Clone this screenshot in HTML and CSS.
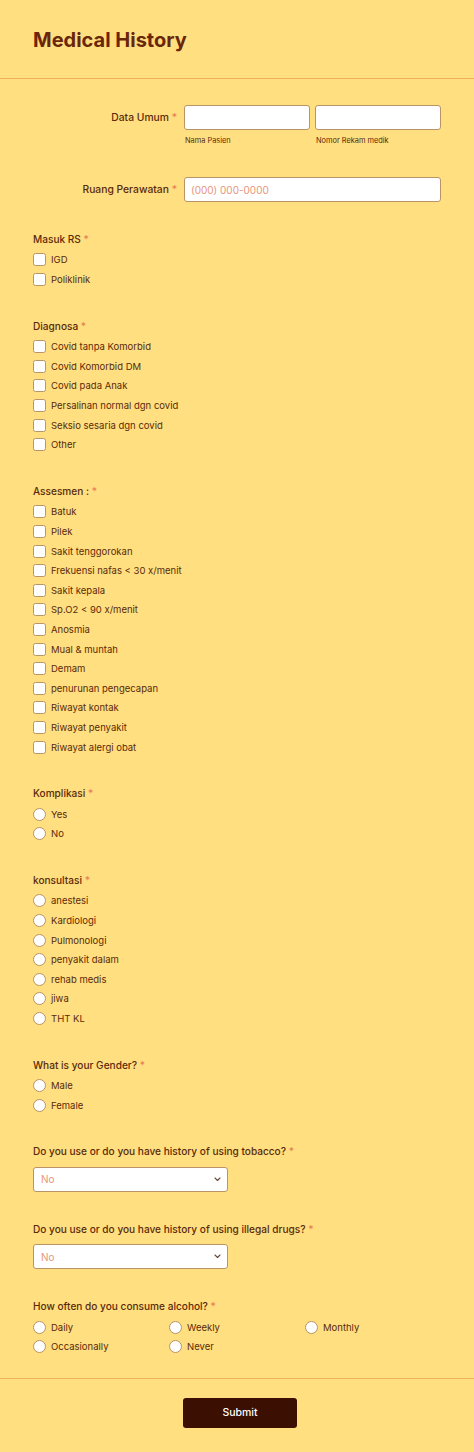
FILE: index.html
```html
<!DOCTYPE html>
<html lang="id">
<head>
<meta charset="utf-8">
<title>Medical History</title>
<link rel="stylesheet" href="styles.css">
</head>
<body>
<div class="page">
  <header class="head">
    <h1 class="title">Medical History</h1>
  </header>

  <main class="form">
    <div class="row-field first">
      <div class="side-label">Data Umum <span class="req">*</span></div>
      <div class="pair">
        <div class="sub">
          <div class="input"></div>
          <div class="sublabel">Nama Pasien</div>
        </div>
        <div class="sub">
          <div class="input"></div>
          <div class="sublabel">Nomor Rekam medik</div>
        </div>
      </div>
    </div>

    <div class="row-field second">
      <div class="side-label">Ruang Perawatan <span class="req">*</span></div>
      <div class="input wide"><span class="ph">(000) 000-0000</span></div>
    </div>

    <section class="field">
      <div class="label">Masuk RS <span class="req">*</span></div>
      <div class="opts">
        <div class="opt"><span class="box"></span>IGD</div>
        <div class="opt"><span class="box"></span>Poliklinik</div>
      </div>
    </section>

    <section class="field">
      <div class="label">Diagnosa <span class="req">*</span></div>
      <div class="opts">
        <div class="opt"><span class="box"></span>Covid tanpa Komorbid</div>
        <div class="opt"><span class="box"></span>Covid Komorbid DM</div>
        <div class="opt"><span class="box"></span>Covid pada Anak</div>
        <div class="opt"><span class="box"></span>Persalinan normal dgn covid</div>
        <div class="opt"><span class="box"></span>Seksio sesaria dgn covid</div>
        <div class="opt"><span class="box"></span>Other</div>
      </div>
    </section>

    <section class="field">
      <div class="label">Assesmen : <span class="req">*</span></div>
      <div class="opts">
        <div class="opt"><span class="box"></span>Batuk</div>
        <div class="opt"><span class="box"></span>Pilek</div>
        <div class="opt"><span class="box"></span>Sakit tenggorokan</div>
        <div class="opt"><span class="box"></span>Frekuensi nafas &lt; 30 x/menit</div>
        <div class="opt"><span class="box"></span>Sakit kepala</div>
        <div class="opt"><span class="box"></span>Sp.O2 &lt; 90 x/menit</div>
        <div class="opt"><span class="box"></span>Anosmia</div>
        <div class="opt"><span class="box"></span>Mual &amp; muntah</div>
        <div class="opt"><span class="box"></span>Demam</div>
        <div class="opt"><span class="box"></span>penurunan pengecapan</div>
        <div class="opt"><span class="box"></span>Riwayat kontak</div>
        <div class="opt"><span class="box"></span>Riwayat penyakit</div>
        <div class="opt"><span class="box"></span>Riwayat alergi obat</div>
      </div>
    </section>

    <section class="field">
      <div class="label">Komplikasi <span class="req">*</span></div>
      <div class="opts">
        <div class="opt"><span class="circle"></span>Yes</div>
        <div class="opt"><span class="circle"></span>No</div>
      </div>
    </section>

    <section class="field">
      <div class="label">konsultasi <span class="req">*</span></div>
      <div class="opts">
        <div class="opt"><span class="circle"></span>anestesi</div>
        <div class="opt"><span class="circle"></span>Kardiologi</div>
        <div class="opt"><span class="circle"></span>Pulmonologi</div>
        <div class="opt"><span class="circle"></span>penyakit dalam</div>
        <div class="opt"><span class="circle"></span>rehab medis</div>
        <div class="opt"><span class="circle"></span>jiwa</div>
        <div class="opt"><span class="circle"></span>THT KL</div>
      </div>
    </section>

    <section class="field">
      <div class="label">What is your Gender? <span class="req">*</span></div>
      <div class="opts">
        <div class="opt"><span class="circle"></span>Male</div>
        <div class="opt"><span class="circle"></span>Female</div>
      </div>
    </section>

    <section class="field">
      <div class="label">Do you use or do you have history of using tobacco? <span class="req">*</span></div>
      <div class="select">
        <span class="ph">No</span>
        <svg class="chev" width="7" height="5" viewBox="0 0 7 5"><path d="M1 1l2.5 2.5L6 1" fill="none" stroke="#6b4a3a" stroke-width="1.1" stroke-linecap="round" stroke-linejoin="round"/></svg>
      </div>
    </section>

    <section class="field sel-next">
      <div class="label">Do you use or do you have history of using illegal drugs? <span class="req">*</span></div>
      <div class="select">
        <span class="ph">No</span>
        <svg class="chev" width="7" height="5" viewBox="0 0 7 5"><path d="M1 1l2.5 2.5L6 1" fill="none" stroke="#6b4a3a" stroke-width="1.1" stroke-linecap="round" stroke-linejoin="round"/></svg>
      </div>
    </section>

    <section class="field sel-next">
      <div class="label">How often do you consume alcohol? <span class="req">*</span></div>
      <div class="opts grid3">
        <div class="opt"><span class="circle"></span>Daily</div>
        <div class="opt"><span class="circle"></span>Weekly</div>
        <div class="opt"><span class="circle"></span>Monthly</div>
        <div class="opt"><span class="circle"></span>Occasionally</div>
        <div class="opt"><span class="circle"></span>Never</div>
      </div>
    </section>
  </main>

  <footer class="foot">
    <button class="submit" type="button">Submit</button>
  </footer>
</div>
</body>
</html>
```

FILE: styles.css
```css
* { box-sizing: border-box; }
html, body { margin: 0; padding: 0; }
body {
  background: #ffdf7f;
  font-family: Inter, "Noto Sans", "Liberation Sans", sans-serif;
  color: #5b2a0b;
}
.page { width: 474px; min-height: 1452px; }

.head {
  padding: 27px 33px 25px;
  border-bottom: 1px solid #eeae5c;
}
.title {
  margin: 0;
  font-size: 20px;
  line-height: 26px;
  font-weight: 700;
  color: #6a260a;
}

.form { padding: 0 33px; width: 474px; }

.row-field { display: flex; align-items: flex-start; }
.row-field.first { margin-top: 26px; }
.row-field.second { margin-top: 31px; }
.side-label {
  width: 151px;
  flex: none;
  padding-right: 7px;
  text-align: right;
  font-size: 10.3px;
  font-weight: 500;
  line-height: 25px;
}
.pair { display: flex; gap: 5px; }
.sub { width: 126px; }
.input {
  height: 25px;
  background: #fff;
  border: 1px solid #b99467;
  border-radius: 3px;
  display: flex;
  align-items: center;
  padding: 0 6px;
}
.input.wide { width: 257px; }
.sublabel {
  margin-top: 6px;
  padding-left: 1px;
  font-size: 7.4px;
  line-height: 10px;
  color: #5b2a0b;
}
.ph { color: #e8957a; font-size: 10px; }

.req { color: #e8825a; }

.field { margin-top: 29.4px; }
.row-field.second + .field { margin-top: 30px; }
.label {
  font-size: 10.1px;
  font-weight: 500;
  line-height: 14px;
}
.opts { margin-top: 4.2px; }
.opt {
  height: 19.6px;
  display: flex;
  align-items: center;
  font-size: 9.5px;
  gap: 5px;
}
.box, .circle {
  width: 13px;
  height: 13px;
  flex: none;
  background: #fff;
  border: 1px solid #b99467;
}
.box { border-radius: 2.5px; }
.circle { border-radius: 50%; }

.grid3 {
  display: grid;
  grid-template-columns: 136px 136px 136px;
}
.grid3 .opt { height: 19.5px; }

.select {
  margin-top: 8.5px;
  width: 195px;
  height: 25px;
  background: #fff;
  border: 1px solid #b99467;
  border-radius: 3px;
  display: flex;
  align-items: center;
  justify-content: space-between;
  padding: 0 6px 0 6px;
}
.select .ph { padding-left: 1px; }
.chev { display: block; }

.field.sel-next { margin-top: 30px; }

.foot {
  margin-top: 21px;
  border-top: 1px solid #eeae5c;
  padding: 19px 0 25px 6px;
  display: flex;
  justify-content: center;
}
.submit {
  width: 114px;
  height: 30px;
  border: none;
  border-radius: 3px;
  background: #3b0f02;
  color: #fff;
  font-family: Inter, "Noto Sans", sans-serif;
  font-size: 10.5px;
  font-weight: 500;
}
```
